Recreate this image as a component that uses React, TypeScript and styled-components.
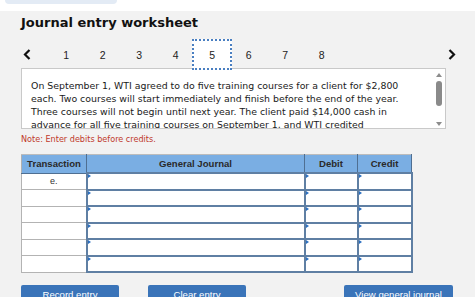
import React from "react";
import styled, { createGlobalStyle } from "styled-components";

const panel = "f2f2f2";
const blue = "3a74b9";
const header = "7aaee3";
const inputLine = "5f7fa3";

const GlobalStyle = createGlobalStyle`
    html, body {
        margin: 0;
        padding: 0;
        background: #ffffff;
        overflow: hidden;
    }
`;

const Page = styled.div`
    width: 475px;
    height: 297px;
    overflow: hidden;
    display: flex;
    flex-direction: column;
    font-family: "DejaVu Sans", Verdana, sans-serif;
`;

const TopStrip = styled.div`
    height: 11px;
    background: #ffffff;
    padding-left: 5px;
    flex-shrink: 0;

    .tab {
        width: 112px;
        height: 4px;
        background: #e3ebf5;
        border-radius: 0 0 5px 5px;
    }
`;

const Panel = styled.div`
    flex: 1;
    background: ${`#${panel}`};
    padding-left: 21px;
    display: flex;
    flex-direction: column;
`;

const Title = styled.h1`
    margin: 4px 0 0 0;
    font-size: 13px;
    line-height: 16px;
    font-weight: bold;
    color: #111;
`;

const Nav = styled.div`
    display: flex;
    align-items: center;
    height: 31px;
    margin-top: 8px;
    position: relative;
    z-index: 1;
`;

const Chevron = styled.div<{ right?: boolean }>`
    width: 25px;
    display: flex;
    justify-content: ${(p) => (p.right ? "center" : "flex-start")};
    padding-left: ${(p) => (p.right ? "0" : "2px")};
    margin-left: ${(p) => (p.right ? "auto" : "0")};
    margin-right: ${(p) => (p.right ? "11px" : "0")};
`;

const Step = styled.div<{ active?: boolean }>`
    width: ${(p) => (p.active ? "40px" : "36.5px")};
    margin: ${(p) => (p.active ? "0 -1.75px" : "0")};
    height: 31px;
    box-sizing: border-box;
    display: flex;
    align-items: center;
    justify-content: center;
    font-family: "Liberation Sans", Arial, sans-serif;
    font-size: 10.5px;
    color: #222;
    background: ${(p) => (p.active ? "#ffffff" : "transparent")};
    border: ${(p) => (p.active ? "2px dotted #4a7fc1" : "none")};
`;

const Problem = styled.div`
    width: 425px;
    height: 61px;
    box-sizing: border-box;
    margin-top: -2px;
    background: #ffffff;
    border: 1px solid #c9c9c9;
    display: flex;
    overflow: hidden;
`;

const ProblemText = styled.div`
    flex: 1;
    padding: 10px 0 0 9px;
    font-size: 9.4px;
    line-height: 13px;
    color: #1a1a1a;
    white-space: nowrap;
    overflow: hidden;
`;

const Scrollbar = styled.div`
    width: 13px;
    display: flex;
    flex-direction: column;
    align-items: center;
    padding: 4px 0 2px;
    box-sizing: border-box;

    .thumb {
        width: 6px;
        height: 25px;
        margin: 4px 0 auto;
        border-radius: 3px;
        background: #8a8a8a;
    }
`;

const Arrow = styled.div<{ down?: boolean }>`
    width: 0;
    height: 0;
    border-left: 3.5px solid transparent;
    border-right: 3.5px solid transparent;
    ${(p) =>
        p.down
            ? "border-top: 4px solid #8c8c8c;"
            : "border-bottom: 4px solid #8c8c8c;"}
`;

const Note = styled.div`
    margin-top: 5px;
    font-size: 8.1px;
    line-height: 11px;
    color: #c0392b;
`;

const Table = styled.table`
    margin-top: 9px;
    border-collapse: collapse;
    width: 390px;
    table-layout: fixed;
    font-family: "Liberation Sans", Arial, sans-serif;

    th {
        height: 17px;
        padding: 0;
        background: ${`#${header}`};
        color: #2a2a2a;
        font-size: 9.6px;
        font-weight: bold;
        border: 1px solid #4f6f92;
        border-top-color: #bcbcbc;
    }

    th:first-child {
        border-left-color: #b0b0b0;
    }
`;

const TxCell = styled.td`
    height: 14.5px;
    padding: 0;
    background: #ffffff;
    border: 1px solid #b3b3b3;
    border-right: 1px solid #4f6f92;
    text-align: center;
    font-size: 9px;
    color: #333;
`;

const EntryCell = styled.td`
    height: 14.5px;
    padding: 0;
    background: #ffffff;
    border: 2px solid ${`#${inputLine}`};
    position: relative;

    &::before {
        content: "";
        position: absolute;
        top: 0;
        left: 0;
        border-top: 2px solid transparent;
        border-bottom: 2px solid transparent;
        border-left: 3px solid #2a6fc0;
    }
`;

const Actions = styled.div`
    display: flex;
    margin-top: 12px;
`;

const Button = styled.button<{ push?: number; grow?: boolean }>`
    width: ${(p) => (p.grow ? "109px" : "98px")};
    height: 22px;
    margin-left: ${(p) => (p.push === undefined ? "0" : `${p.push}px`)};
    ${(p) => (p.grow ? "margin-left: auto; margin-right: 22px;" : "")}
    border: none;
    border-radius: 2px;
    background: ${`#${blue}`};
    color: #ffffff;
    font-family: "Liberation Sans", Arial, sans-serif;
    font-size: 9.6px;
    padding: 4px 0 0;
    display: flex;
    justify-content: center;
    align-items: flex-start;
`;

const ChevronIcon = ({ right }: { right?: boolean }) => (
    <svg width="8" height="11" viewBox="0 0 8 11">
        <polyline
            points={right ? "1.5,1 6,5.5 1.5,10" : "6.5,1 2,5.5 6.5,10"}
            fill="none"
            stroke="#111"
            strokeWidth="2.2"
        />
    </svg>
);

const lines = [
    "On September 1, WTI agreed to do five training courses for a client for $2,800",
    "each. Two courses will start immediately and finish before the end of the year.",
    "Three courses will not begin until next year. The client paid $14,000 cash in",
    "advance for all five training courses on September 1, and WTI credited",
    "Unearned Revenue.",
];

function App() {
    const steps = [1, 2, 3, 4, 5, 6, 7, 8];
    const rows = ["e.", "", "", "", "", ""];

    return (
        <Page>
            <GlobalStyle />
            <TopStrip>
                <div className="tab" />
            </TopStrip>
            <Panel>
                <Title>Journal entry worksheet</Title>
                <Nav>
                    <Chevron>
                        <ChevronIcon />
                    </Chevron>
                    {steps.map((s) => (
                        <Step key={s} active={s === 5}>
                            {s}
                        </Step>
                    ))}
                    <Chevron right>
                        <ChevronIcon right />
                    </Chevron>
                </Nav>
                <Problem>
                    <ProblemText>
                        {lines.map((l, i) => (
                            <div key={i}>{l}</div>
                        ))}
                    </ProblemText>
                    <Scrollbar>
                        <Arrow />
                        <div className="thumb" />
                        <Arrow down />
                    </Scrollbar>
                </Problem>
                <Note>Note: Enter debits before credits.</Note>
                <Table>
                    <colgroup>
                        <col style={{ width: 65 }} />
                        <col style={{ width: 218 }} />
                        <col style={{ width: 53 }} />
                        <col style={{ width: 54 }} />
                    </colgroup>
                    <thead>
                        <tr>
                            <th>Transaction</th>
                            <th>General Journal</th>
                            <th>Debit</th>
                            <th>Credit</th>
                        </tr>
                    </thead>
                    <tbody>
                        {rows.map((r, i) => (
                            <tr key={i}>
                                <TxCell>{r}</TxCell>
                                <EntryCell />
                                <EntryCell />
                                <EntryCell />
                            </tr>
                        ))}
                    </tbody>
                </Table>
                <Actions>
                    <Button>Record entry</Button>
                    <Button push={29}>Clear entry</Button>
                    <Button grow>View general journal</Button>
                </Actions>
            </Panel>
        </Page>
    );
}

export default App;
